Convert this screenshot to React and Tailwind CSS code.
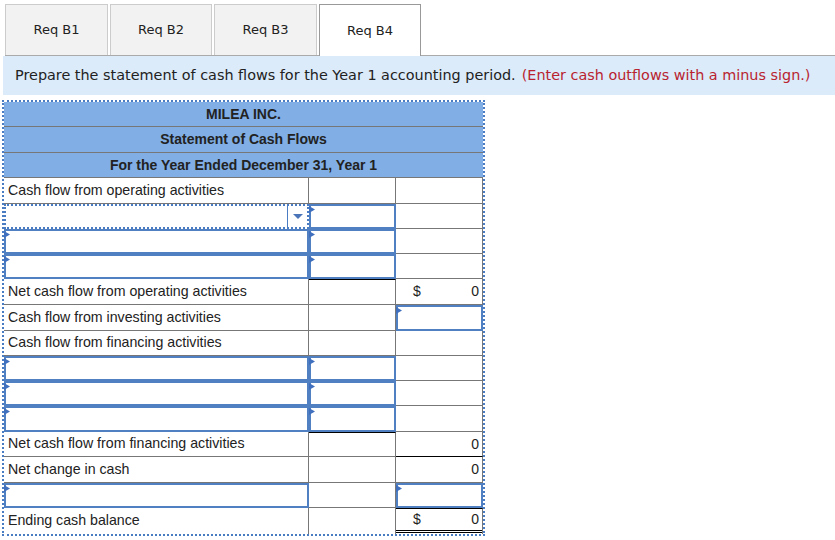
import React from 'react';

const ARIAL = { fontFamily: '"Liberation Sans", Arial, sans-serif' };
const VERDANA = { fontFamily: '"DejaVu Sans", Verdana, sans-serif' };

const tabs = [
  { label: 'Req B1', w: 'w-[103px]' },
  { label: 'Req B2', w: 'w-[102px]' },
  { label: 'Req B3', w: 'w-[103px]' },
  { label: 'Req B4', w: 'w-[102px]', active: true },
];

// one entry per body row of the statement
const rows = [
  { h: 'h-[26px]', label: 'Cash flow from operating activities' },
  { h: 'h-[25px]', dropdown: true, c2: 'input' },
  { h: 'h-[25px]', c1: 'input', c2: 'input' },
  { h: 'h-[25px]', c1: 'input', c2: 'input' },
  { h: 'h-[26px]', label: 'Net cash flow from operating activities', c2Top: true, c3: { dollar: true, val: '0' } },
  { h: 'h-[26px]', label: 'Cash flow from investing activities', c3: 'input' },
  { h: 'h-[25px]', label: 'Cash flow from financing activities' },
  { h: 'h-[25px]', c1: 'input', c2: 'input' },
  { h: 'h-[25px]', c1: 'input', c2: 'input' },
  { h: 'h-[26px]', c1: 'input', c2: 'input' },
  { h: 'h-[25px]', label: 'Net cash flow from financing activities', c2Top: true, c3: { val: '0', bottomBlack: true } },
  { h: 'h-[26px]', label: 'Net change in cash', c3: { val: '0' } },
  { h: 'h-[25px]', c1: 'input', c3: 'input' },
  { h: 'h-[26px]', label: 'Ending cash balance', last: true, c3: { dollar: true, val: '0', topBlack: true, double: true } },
];

function Marker() {
  return (
    <svg className="absolute left-[-2px] top-[0px]" width="6" height="7" viewBox="0 0 6 7">
      <polygon points="0,0 6,3.5 0,7" fill="#3f6fbd" />
    </svg>
  );
}

function InputBox() {
  return (
    <div className="relative h-full w-full border-2 border-[#5080c2] bg-white">
      <Marker />
    </div>
  );
}

function Dropdown() {
  return (
    <div className="flex h-full w-full border-2 border-dotted border-[#4a7cc3]">
      <div className="flex-1" />
      <div className="flex w-[20px] items-center justify-center border-l border-[#4a7cc3]">
        <svg width="10" height="5" viewBox="0 0 10 5">
          <polygon points="0,0 10,0 5,5" fill="#4a74b8" />
        </svg>
      </div>
    </div>
  );
}

function BodyRow({ row }) {
  const bottom = row.last ? '' : 'border-b border-[#777]';
  const c1Box = row.c1 || row.dropdown;
  return (
    <div className={`flex ${row.h}`}>
      {/* column 1 */}
      <div
        className={`w-[305px] ${c1Box ? '' : `border-r border-[#777] ${bottom} pl-[4px] pr-1`} flex items-center text-[14.2px] text-[#222]`}
      >
        {row.dropdown ? <Dropdown /> : row.c1 === 'input' ? <InputBox /> : row.label}
      </div>
      {/* column 2 */}
      <div className={`w-[87px] ${row.c2 === 'input' ? '' : `border-r border-[#777] ${bottom}`} ${row.c2Top ? 'border-t border-t-black' : ''}`}>
        {row.c2 === 'input' && <InputBox />}
      </div>
      {/* column 3 */}
      <div
        className={`w-[87px] ${row.c3 === 'input' ? '' : 'border-r border-[#777]'} ${
          row.c3 === 'input' ? '' : row.c3 && row.c3.bottomBlack ? 'border-b border-b-black' : bottom
        } ${row.c3 && row.c3.topBlack ? 'border-t border-t-black' : ''}`}
      >
        {row.c3 === 'input' && <InputBox />}
        {row.c3 && row.c3 !== 'input' && (
          <div className="flex h-full flex-col">
            <div className="flex flex-1 items-center justify-between pl-[17px] pr-[3px] text-[14px] text-[#222]">
              <span>{row.c3.dollar ? '$' : ''}</span>
              <span>{row.c3.val}</span>
            </div>
            {row.c3.double && <div className="mb-[2px] h-[3px] border-b-[3px] border-double border-black" />}
          </div>
        )}
      </div>
    </div>
  );
}

export default function App() {
  return (
    <div className="h-[540px] w-[835px] overflow-hidden bg-white">
      {/* requirement tabs */}
      <div className="ml-[5px] flex h-[56px] items-end gap-[2px] border-b border-[#aaa]" style={VERDANA}>
        {tabs.map((t) =>
          t.active ? (
            <div
              key={t.label}
              className={`${t.w} -mb-px flex h-[52px] items-center justify-center border border-b-0 border-[#999] bg-white text-[13px] text-[#222]`}
            >
              {t.label}
            </div>
          ) : (
            <div
              key={t.label}
              className={`${t.w} flex h-[51px] items-center justify-center border border-b-0 border-[#ccc] bg-[#f2f2f2] text-[13px] text-[#222]`}
            >
              {t.label}
            </div>
          )
        )}
      </div>

      {/* instructions */}
      <div
        className="ml-[3px] flex h-[39px] items-center whitespace-nowrap bg-[#dcebfa] pl-[12px] pt-px text-[14.4px] text-[#222]"
        style={VERDANA}
      >
        <span>Prepare the statement of cash flows for the Year 1 accounting period.</span>
        <span className="ml-[6px] text-[#b8232f]">(Enter cash outflows with a minus sign.)</span>
      </div>

      {/* statement table */}
      <div className="ml-[2px] mt-[5px] w-[483px] border-2 border-dotted border-[#4a7cc3]" style={ARIAL}>
        <div className="bg-[#80aee5] text-[14px] font-bold text-[#222]">
          <div className="flex h-[25px] items-center justify-center border-b border-[#777]">MILEA INC.</div>
          <div className="flex h-[26px] items-center justify-center border-b border-[#777]">Statement of Cash Flows</div>
          <div className="flex h-[25px] items-center justify-center border-b border-[#777]">For the Year Ended December 31, Year 1</div>
        </div>
        {rows.map((row, i) => (
          <BodyRow key={i} row={row} />
        ))}
      </div>
    </div>
  );
}
